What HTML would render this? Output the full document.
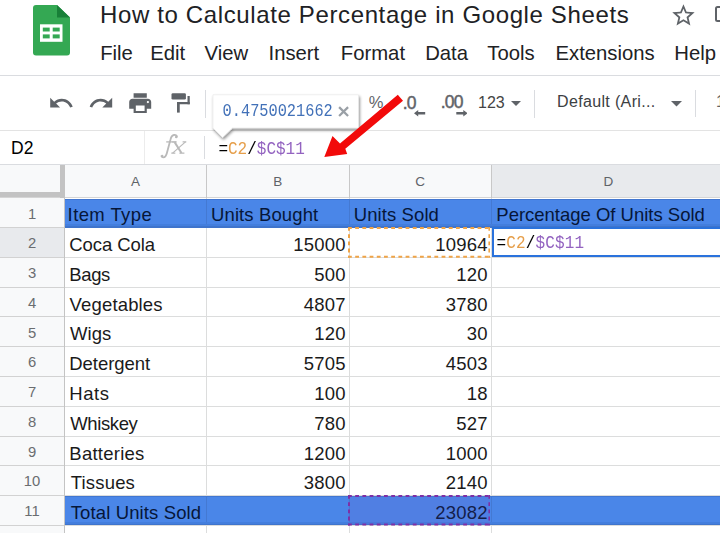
<!DOCTYPE html>
<html><head><meta charset="utf-8"><style>
html,body{margin:0;padding:0;}
body{width:720px;height:533px;overflow:hidden;position:relative;background:#fff;font-family:"Liberation Sans",sans-serif;}
.a{position:absolute;}
.t{position:absolute;white-space:pre;line-height:1;}
.menu{font-size:20.3px;color:#202124;top:42.6px;}
.cell{font-size:18.5px;color:#1a1a1a;}
.rh{font-size:14.8px;color:#6a6d70;text-align:center;width:64px;left:0;}
.ch{font-size:13.5px;color:#5f6368;text-align:center;}
.mono{font-family:"Liberation Mono",monospace;}
</style></head><body>

<svg class="a" style="left:32.5px;top:5px" width="37" height="50.5" viewBox="0 0 37 50.5">
<path d="M3 0H24L37 12.5V47.5a3 3 0 0 1-3 3H3a3 3 0 0 1-3-3V3a3 3 0 0 1 3-3z" fill="#34a853"/>
<path d="M24 0L37 12.5H24z" fill="#188038"/>
<rect x="7" y="19.3" width="22.5" height="17.5" fill="#fff"/>
<rect x="9.8" y="22.6" width="6.9" height="3.9" fill="#34a853"/>
<rect x="19.7" y="22.6" width="7" height="3.9" fill="#34a853"/>
<rect x="9.8" y="29.4" width="6.9" height="4" fill="#34a853"/>
<rect x="19.7" y="29.4" width="7" height="4" fill="#34a853"/>
</svg>
<div class="t" style="left:100px;top:2.9px;font-size:24px;letter-spacing:0.63px;color:#202124">How to Calculate Percentage in Google Sheets</div>
<svg class="a" style="left:670.4px;top:1.8px" width="26.9" height="26.9" viewBox="0 0 24 24"><path fill="#5f6368" d="M22 9.24l-7.19-.62L12 2 9.19 8.63 2 9.24l5.46 4.73L5.82 21 12 17.27 18.18 21l-1.63-7.03L22 9.24zM12 15.4l-3.76 2.27 1-4.28-3.32-2.88 4.38-.38L12 6.1l1.71 4.04 4.38.38-3.32 2.88 1 4.28L12 15.4z"/></svg>
<div class="a" style="left:715.2px;top:6.1px;width:18px;height:12.1px;border:2.2px solid #5f6368;border-radius:2.5px"></div>
<div class="t menu" style="left:100.20px">File</div>
<div class="t menu" style="left:150.20px">Edit</div>
<div class="t menu" style="left:204.50px">View</div>
<div class="t menu" style="left:268.50px">Insert</div>
<div class="t menu" style="left:340.80px">Format</div>
<div class="t menu" style="left:425.20px">Data</div>
<div class="t menu" style="left:487.30px">Tools</div>
<div class="t menu" style="left:555.50px">Extensions</div>
<div class="t menu" style="left:674.25px">Help</div>
<div class="a" style="left:0;top:75px;width:720px;height:1px;background:#dadce0"></div>
<svg class="a" style="left:47.8px;top:89.8px" width="26.4" height="26.4" viewBox="0 0 24 24"><path fill="#5f6368" d="M12.5 8c-2.65 0-5.05.99-6.9 2.6L2 7v9h9l-3.62-3.62c1.39-1.16 3.16-1.88 5.12-1.88 3.54 0 6.55 2.31 7.6 5.5l2.37-.78C21.08 11.03 17.15 8 12.5 8z"/></svg>
<svg class="a" style="left:88.3px;top:89.8px" width="26.4" height="26.4" viewBox="0 0 24 24"><path fill="#5f6368" d="M18.4 10.6C16.55 8.99 14.15 8 11.5 8c-4.65 0-8.58 3.03-9.96 7.22L3.9 16c1.05-3.19 4.05-5.5 7.6-5.5 1.95 0 3.73.72 5.12 1.88L13 16h9V7l-3.6 3.6z"/></svg>
<svg class="a" style="left:126.8px;top:89.7px" width="26.4" height="26.4" viewBox="0 0 24 24"><path fill="#5f6368" d="M19 8H5c-1.66 0-3 1.34-3 3v6h4v4h12v-4h4v-6c0-1.66-1.34-3-3-3zm-3 11H8v-5h8v5zm3-7c-.55 0-1-.45-1-1s.45-1 1-1 1 .45 1 1-.45 1-1 1zm-1-9H6v4h12V3z"/></svg>
<svg class="a" style="left:170px;top:92px" width="22" height="22" viewBox="0 0 22 22">
<rect x="1.5" y="1.25" width="14.4" height="6.3" rx="1.3" fill="#5f6368"/>
<rect x="17.5" y="4" width="2.25" height="8.25" fill="#5f6368"/>
<rect x="7" y="10" width="12.75" height="2.25" fill="#5f6368"/>
<rect x="7" y="10" width="2.75" height="10.6" fill="#5f6368"/>
</svg>
<div class="a" style="left:205.3px;top:90px;width:1px;height:27.5px;background:#dadce0"></div>
<div class="a" style="left:534px;top:90px;width:1px;height:27.5px;background:#dadce0"></div>
<div class="a" style="left:695.2px;top:89.5px;width:1px;height:27.5px;background:#dadce0"></div>
<div class="t" style="left:368.8px;top:94.2px;font-size:16.5px;color:#5f6368">%</div>
<div class="t" style="left:402.8px;top:94.6px;font-size:17.5px;color:#5f6368;letter-spacing:-1px;-webkit-text-stroke:0.45px #5f6368">.0</div>
<svg class="a" style="left:414px;top:110.3px" width="11.5" height="6.5" viewBox="0 0 11.5 6.5"><path fill="#5f6368" d="M0 3.25L4.2 0V2.1H11.2V4.4H4.2V6.5z"/></svg>
<div class="t" style="left:440.8px;top:94.3px;font-size:17.5px;color:#5f6368;letter-spacing:-0.8px;-webkit-text-stroke:0.45px #5f6368">.00</div>
<svg class="a" style="left:455.8px;top:110.2px" width="11.5" height="6.5" viewBox="0 0 11.5 6.5"><path fill="#5f6368" d="M11.5 3.25L7.3 0V2.1H0.3V4.4H7.3V6.5z"/></svg>
<div class="t" style="left:478px;top:94.5px;font-size:16px;color:#444">123</div>
<svg class="a" style="left:511px;top:101.3px" width="10" height="5" viewBox="0 0 10 5"><path fill="#5f6368" d="M0 0H10L5 5z"/></svg>
<div class="t" style="left:557px;top:94.3px;font-size:16px;letter-spacing:0.35px;color:#3c4043">Default (Ari...</div>
<svg class="a" style="left:671px;top:101.3px" width="11" height="5.5" viewBox="0 0 11 5.5"><path fill="#5f6368" d="M0 0H11L5.5 5.5z"/></svg>
<div class="t" style="left:716px;top:93.5px;font-size:16px;color:#5f6368">1</div>
<div class="a" style="left:0;top:130px;width:720px;height:1px;background:#e3e3e3"></div>
<div class="a" style="left:0;top:163.5px;width:720px;height:1px;background:#dadce0"></div>
<div class="a" style="left:144.2px;top:131px;width:1px;height:32.5px;background:#ececec"></div>
<div class="a" style="left:204px;top:135.6px;width:1px;height:23.6px;background:#dadce0"></div>
<div class="t" style="left:11px;top:140px;font-size:17.5px;color:#000">D2</div>
<svg class="a" style="left:0;top:0" width="200" height="165" viewBox="0 0 200 165" fill="none" stroke="#b9b9b9" stroke-linecap="butt">
<path stroke-width="1.8" d="M177.2,136.8 C176.8,135.2 175.3,134.8 174.1,135 C172.2,135.3 171.1,137 170.5,139.5 L166.9,153 C166.3,155.5 165.1,157.4 163.3,157.4 C162.2,157.4 161.4,156.8 161.5,155.6"/>
<circle cx="176.3" cy="137" r="1.35" fill="#b9b9b9" stroke="none"/>
<circle cx="162.2" cy="155.9" r="1.2" fill="#b9b9b9" stroke="none"/>
<path stroke-width="1.3" d="M166.2,141.9 H176.6"/>
<path stroke-width="2" d="M174.6,142.1 L181.5,153"/>
<path stroke-width="1.1" d="M179.4,153.1 H184.4 M172.2,142 H176.2"/>
<path stroke-width="1.2" d="M185.5,141.9 L172.6,153.1"/>
<path stroke-width="1.1" d="M171.3,153.1 H175.3 M182.6,141.9 H186.3"/>
</svg>
<div class="t mono" style="left:218.4px;top:142.2px;font-size:16px;color:#000;transform:scaleY(1.13);transform-origin:0 12.5px">=<span style="color:#e69f4b">C2</span>/<span style="color:#9363c0">$C$11</span></div>
<div class="a" style="left:0;top:164.5px;width:720px;height:33px;background:#f8f9fa"></div>
<div class="a" style="left:491.1px;top:164.5px;width:229px;height:33px;background:#e8eaed"></div>
<div class="a" style="left:0;top:196.8px;width:720px;height:1.2px;background:#d5d5d5"></div>
<div class="t ch" style="left:64.5px;width:142.2px;top:174.5px">A</div>
<div class="t ch" style="left:206.7px;width:142.3px;top:174.5px">B</div>
<div class="a" style="left:206.2px;top:164.5px;width:1px;height:33px;background:#c8c8c8"></div>
<div class="t ch" style="left:349.0px;width:142.1px;top:174.5px">C</div>
<div class="a" style="left:348.5px;top:164.5px;width:1px;height:33px;background:#c8c8c8"></div>
<div class="t ch" style="left:491.1px;width:234.4px;top:174.5px">D</div>
<div class="a" style="left:490.6px;top:164.5px;width:1px;height:33px;background:#c8c8c8"></div>
<div class="a" style="left:0;top:197.9px;width:64.5px;height:335.1px;background:#f8f9fa"></div>
<div class="a" style="left:0;top:227.67px;width:64.5px;height:29.77px;background:#e8eaed"></div>
<div class="a" style="left:59.5px;top:164.5px;width:5.5px;height:33px;background:#c3c3c3"></div>
<div class="a" style="left:0;top:191.8px;width:65px;height:5.5px;background:#c3c3c3"></div>
<div class="a" style="left:0;top:227.17px;width:720px;height:1px;background:#dcdddd"></div>
<div class="a" style="left:0;top:256.94px;width:720px;height:1px;background:#dcdddd"></div>
<div class="a" style="left:0;top:286.71px;width:720px;height:1px;background:#dcdddd"></div>
<div class="a" style="left:0;top:316.48px;width:720px;height:1px;background:#dcdddd"></div>
<div class="a" style="left:0;top:346.25px;width:720px;height:1px;background:#dcdddd"></div>
<div class="a" style="left:0;top:376.02px;width:720px;height:1px;background:#dcdddd"></div>
<div class="a" style="left:0;top:405.79px;width:720px;height:1px;background:#dcdddd"></div>
<div class="a" style="left:0;top:435.56px;width:720px;height:1px;background:#dcdddd"></div>
<div class="a" style="left:0;top:465.33px;width:720px;height:1px;background:#dcdddd"></div>
<div class="a" style="left:0;top:495.10px;width:720px;height:1px;background:#dcdddd"></div>
<div class="a" style="left:0;top:524.87px;width:720px;height:1px;background:#dcdddd"></div>
<div class="a" style="left:0;top:227.17px;width:64px;height:1px;background:#d2d2d2"></div>
<div class="a" style="left:0;top:256.94px;width:64px;height:1px;background:#d2d2d2"></div>
<div class="a" style="left:0;top:286.71px;width:64px;height:1px;background:#d2d2d2"></div>
<div class="a" style="left:0;top:316.48px;width:64px;height:1px;background:#d2d2d2"></div>
<div class="a" style="left:0;top:346.25px;width:64px;height:1px;background:#d2d2d2"></div>
<div class="a" style="left:0;top:376.02px;width:64px;height:1px;background:#d2d2d2"></div>
<div class="a" style="left:0;top:405.79px;width:64px;height:1px;background:#d2d2d2"></div>
<div class="a" style="left:0;top:435.56px;width:64px;height:1px;background:#d2d2d2"></div>
<div class="a" style="left:0;top:465.33px;width:64px;height:1px;background:#d2d2d2"></div>
<div class="a" style="left:0;top:495.10px;width:64px;height:1px;background:#d2d2d2"></div>
<div class="a" style="left:0;top:524.87px;width:64px;height:1px;background:#d2d2d2"></div>
<div class="a" style="left:206.2px;top:197.9px;width:1px;height:335.1px;background:#dcdddd"></div>
<div class="a" style="left:348.5px;top:197.9px;width:1px;height:335.1px;background:#dcdddd"></div>
<div class="a" style="left:490.6px;top:197.9px;width:1px;height:335.1px;background:#dcdddd"></div>
<div class="a" style="left:63.8px;top:197.9px;width:1.4px;height:335.1px;background:#c4c4c4"></div>
<div class="a" style="left:65px;top:198.80px;width:655px;height:28.87px;background:#4a86e8"></div>
<div class="a" style="left:206.2px;top:198.80px;width:1px;height:28.87px;background:#4479d2"></div>
<div class="a" style="left:348.5px;top:198.80px;width:1px;height:28.87px;background:#4479d2"></div>
<div class="a" style="left:490.6px;top:198.80px;width:1px;height:28.87px;background:#4479d2"></div>
<div class="a" style="left:65px;top:198.80px;width:655px;height:1.2px;background:#4176d0"></div>
<div class="a" style="left:65px;top:224.47px;width:655px;height:2.5px;background:#437edd"></div>
<div class="a" style="left:65px;top:226.47px;width:655px;height:1.2px;background:#3f74cc"></div>
<div class="a" style="left:65px;top:495.60px;width:655px;height:29.77px;background:#4a86e8"></div>
<div class="a" style="left:206.2px;top:496.50px;width:1px;height:28.87px;background:#4479d2"></div>
<div class="a" style="left:348.5px;top:496.50px;width:1px;height:28.87px;background:#4479d2"></div>
<div class="a" style="left:490.6px;top:496.50px;width:1px;height:28.87px;background:#4479d2"></div>
<div class="a" style="left:65px;top:495.60px;width:655px;height:1.2px;background:#4176d0"></div>
<div class="a" style="left:65px;top:522.17px;width:655px;height:2.5px;background:#437edd"></div>
<div class="a" style="left:65px;top:524.17px;width:655px;height:1.2px;background:#3f74cc"></div>
<div class="t rh" style="top:206.56px">1</div>
<div class="t rh" style="top:236.33px">2</div>
<div class="t rh" style="top:266.10px">3</div>
<div class="t rh" style="top:295.87px">4</div>
<div class="t rh" style="top:325.64px">5</div>
<div class="t rh" style="top:355.41px">6</div>
<div class="t rh" style="top:385.18px">7</div>
<div class="t rh" style="top:414.95px">8</div>
<div class="t rh" style="top:444.72px">9</div>
<div class="t rh" style="top:474.49px">10</div>
<div class="t rh" style="top:504.26px">11</div>
<div class="t cell" style="color:#061638;left:67.60px;letter-spacing:0.400px;top:205.74px">Item Type</div>
<div class="t cell" style="color:#061638;left:211.00px;letter-spacing:0.118px;top:205.74px">Units Bought</div>
<div class="t cell" style="color:#061638;left:353.80px;letter-spacing:0.089px;top:205.74px">Units Sold</div>
<div class="t cell" style="color:#061638;left:496.30px;letter-spacing:-0.009px;top:205.74px">Percentage Of Units Sold</div>
<div class="t cell" style="color:#1a1a1a;left:69.20px;letter-spacing:-0.062px;top:236.11px">Coca Cola</div>
<div class="t cell" style="color:#1a1a1a;right:374.1px;top:236.11px;letter-spacing:0.25px">15000</div>
<div class="t cell" style="color:#1a1a1a;right:232.1px;top:236.11px;letter-spacing:0.25px">10964</div>
<div class="t cell" style="color:#1a1a1a;left:69.30px;letter-spacing:-0.367px;top:265.88px">Bags</div>
<div class="t cell" style="color:#1a1a1a;right:374.1px;top:265.88px;letter-spacing:0.25px">500</div>
<div class="t cell" style="color:#1a1a1a;right:232.1px;top:265.88px;letter-spacing:0.25px">120</div>
<div class="t cell" style="color:#1a1a1a;left:69.60px;letter-spacing:0.156px;top:295.65px">Vegetables</div>
<div class="t cell" style="color:#1a1a1a;right:374.1px;top:295.65px;letter-spacing:0.25px">4807</div>
<div class="t cell" style="color:#1a1a1a;right:232.1px;top:295.65px;letter-spacing:0.25px">3780</div>
<div class="t cell" style="color:#1a1a1a;left:70.00px;letter-spacing:0.067px;top:325.42px">Wigs</div>
<div class="t cell" style="color:#1a1a1a;right:374.1px;top:325.42px;letter-spacing:0.25px">120</div>
<div class="t cell" style="color:#1a1a1a;right:232.1px;top:325.42px;letter-spacing:0.25px">30</div>
<div class="t cell" style="color:#1a1a1a;left:69.30px;letter-spacing:-0.037px;top:355.19px">Detergent</div>
<div class="t cell" style="color:#1a1a1a;right:374.1px;top:355.19px;letter-spacing:0.25px">5705</div>
<div class="t cell" style="color:#1a1a1a;right:232.1px;top:355.19px;letter-spacing:0.25px">4503</div>
<div class="t cell" style="color:#1a1a1a;left:69.30px;letter-spacing:0.533px;top:384.96px">Hats</div>
<div class="t cell" style="color:#1a1a1a;right:374.1px;top:384.96px;letter-spacing:0.25px">100</div>
<div class="t cell" style="color:#1a1a1a;right:232.1px;top:384.96px;letter-spacing:0.25px">18</div>
<div class="t cell" style="color:#1a1a1a;left:70.30px;letter-spacing:-0.400px;top:414.73px">Whiskey</div>
<div class="t cell" style="color:#1a1a1a;right:374.1px;top:414.73px;letter-spacing:0.25px">780</div>
<div class="t cell" style="color:#1a1a1a;right:232.1px;top:414.73px;letter-spacing:0.25px">527</div>
<div class="t cell" style="color:#1a1a1a;left:69.30px;letter-spacing:0.250px;top:444.50px">Batteries</div>
<div class="t cell" style="color:#1a1a1a;right:374.1px;top:444.50px;letter-spacing:0.25px">1200</div>
<div class="t cell" style="color:#1a1a1a;right:232.1px;top:444.50px;letter-spacing:0.25px">1000</div>
<div class="t cell" style="color:#1a1a1a;left:70.80px;letter-spacing:0.167px;top:474.27px">Tissues</div>
<div class="t cell" style="color:#1a1a1a;right:374.1px;top:474.27px;letter-spacing:0.25px">3800</div>
<div class="t cell" style="color:#1a1a1a;right:232.1px;top:474.27px;letter-spacing:0.25px">2140</div>
<div class="t cell" style="color:#061638;left:70.70px;letter-spacing:0.127px;top:504.04px">Total Units Sold</div>
<div class="t cell" style="color:#061638;right:232.1px;top:504.04px;letter-spacing:0.25px">23082</div>
<svg class="a" style="left:348.00px;top:227.20px" width="142.40" height="30.80" viewBox="0 0 142.40 30.80" fill="none" stroke="#efa447" stroke-width="2.00" stroke-dasharray="3.80 3.40"><path d="M0 1.00H142.40"/><path d="M0 29.80H142.40"/><path d="M1.00 0V30.80"/><path d="M141.40 0V30.80"/></svg>
<div class="a" style="left:348px;top:495.60px;width:142.4px;height:29.77px;background:rgba(120,80,200,0.12)"></div>
<svg class="a" style="left:348.00px;top:495.20px" width="142.40" height="30.50" viewBox="0 0 142.40 30.50" fill="none" stroke="#7e2fa6" stroke-width="2.00" stroke-dasharray="3.80 3.40"><path d="M0 1.00H142.40"/><path d="M0 29.50H142.40"/><path d="M1.00 0V30.50"/><path d="M141.40 0V30.50"/></svg>
<div class="a" style="left:491.5px;top:227px;width:240px;height:26.4px;border:2.3px solid #2a72dc;background:#fff"></div>
<div class="t mono" style="left:496.4px;top:236.4px;font-size:16px;letter-spacing:0.15px;color:#000;transform:scaleY(1.13);transform-origin:0 12.5px">=<span style="color:#e69f4b">C2</span>/<span style="color:#9363c0">$C$11</span></div>
<svg class="a" style="left:205px;top:88px" width="165" height="60" viewBox="0 0 165 60">
<defs><filter id="sh" x="-20%" y="-30%" width="140%" height="170%"><feGaussianBlur in="SourceAlpha" stdDeviation="1.6"/><feOffset dx="0.5" dy="1.5"/><feComponentTransfer><feFuncA type="linear" slope="0.45"/></feComponentTransfer><feMerge><feMergeNode/><feMergeNode in="SourceGraphic"/></feMerge></filter></defs>
<path filter="url(#sh)" fill="#fff" stroke="#e6e6e6" stroke-width="0.6" d="M8 6.8H153.5V40H27.5L17.5 49.5L8 40z"/>
</svg>
<div class="t mono" style="left:222.6px;top:104.6px;font-size:15.3px;color:#4271b8;transform:scaleY(1.2);transform-origin:0 12px">0.4750021662</div>
<svg class="a" style="left:338.3px;top:105.9px" width="11.2" height="11.2" viewBox="0 0 10 10"><path stroke="#9aa0a6" stroke-width="2" d="M1 1L9 9M9 1L1 9"/></svg>
<svg class="a" style="left:0;top:0" width="720" height="533" viewBox="0 0 720 533">
<polygon fill="#f20a0a" points="397.8,94.8 403,100.8 345.3,148.8 347.2,154 324.3,157 332.5,136 340,143.5"/>
</svg>
</body></html>
